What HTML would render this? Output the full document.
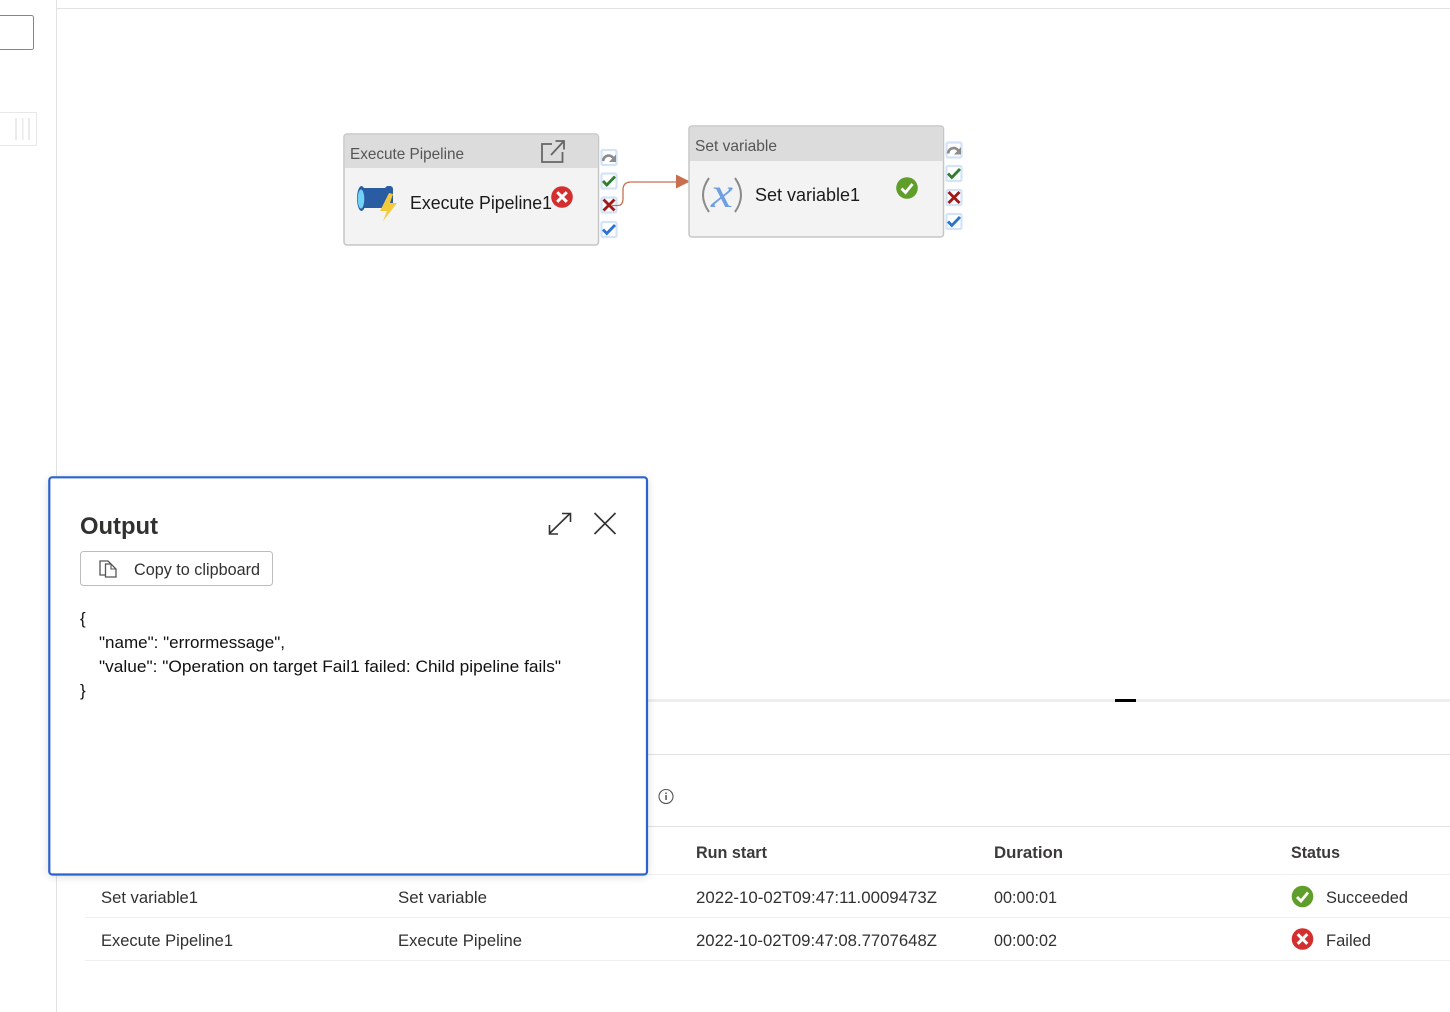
<!DOCTYPE html>
<html><head><meta charset="utf-8"><title>Output</title>
<style>
html,body{margin:0;padding:0;background:#fff;width:1450px;height:1012px;overflow:hidden}
svg{display:block}
text{font-family:"Liberation Sans",sans-serif;font-size:17px;fill:#323130}
.b{font-weight:bold;stroke:none;fill:#3b3a39}
</style></head><body>
<svg width="1450" height="1012" viewBox="0 0 1450 1012" xmlns="http://www.w3.org/2000/svg">
<defs>
<filter id="sh" x="-5%" y="-5%" width="110%" height="110%"><feGaussianBlur stdDeviation="5"/></filter>
<g id="box"><rect x="-7.500" y="-7.500" width="15" height="15" rx="1.500" fill="#fff" stroke="#d3e4f8" stroke-width="2.200"/></g>
<g id="redo"><use href="#box"/><path d="M-6 3.500C-5-2.500 1.500-4 5 1.500" fill="none" stroke="#8c8c8c" stroke-width="2.600"/><path d="M7-3V4.500H0Z" fill="#8c8c8c"/></g>
<g id="gc"><use href="#box"/><path d="M-6 0L-2.200 4L6-4.500" fill="none" stroke="#2f7d2f" stroke-width="2.800"/></g>
<g id="rx"><use href="#box"/><path d="M-5.500-5.500L5.500 5.500M5.500-5.500L-5.500 5.500" fill="none" stroke="#a11a1a" stroke-width="2.900"/></g>
<g id="bc"><use href="#box"/><path d="M-6 0L-2.200 4L6-4.500" fill="none" stroke="#2a74d0" stroke-width="2.800"/></g>
<g id="ok"><circle r="10.800" fill="#5f9e2a"/><path d="M-5.500 0.500L-1.500 4.500L5.500-4" fill="none" stroke="#fff" stroke-width="2.800"/></g>
<g id="bad"><circle r="10.800" fill="#d32f2f"/><path d="M-4.800-4.800L4.800 4.800M4.800-4.800L-4.800 4.800" fill="none" stroke="#fff" stroke-width="3"/></g>
</defs>

<!-- page chrome -->
<rect x="56" y="0" width="1" height="1012" fill="#e2e2e2"/>
<rect x="57" y="8" width="1393" height="1" fill="#e2e2e2"/>
<rect x="-3" y="15.500" width="36.500" height="34" rx="2" fill="#fff" stroke="#858585"/>
<rect x="-3" y="112.500" width="39.500" height="33" fill="#fff" stroke="#e8e8e8"/>
<rect x="15" y="118" width="2" height="22" fill="#ebebeb"/><rect x="22" y="118" width="1.500" height="22" fill="#ebebeb"/><rect x="28" y="118" width="2" height="22" fill="#ebebeb"/>

<!-- Execute Pipeline node -->
<rect x="344" y="134" width="254.500" height="111" rx="3" fill="#f3f3f3" stroke="#c6c6c6" stroke-width="1.500"/>
<path d="M345 168V136q0-1 1-1H597q1 0 1 1V168Z" fill="#dcdcdc"/>
<text x="350" y="159" textLength="114" lengthAdjust="spacingAndGlyphs" style="font-size:16px;fill:#555">Execute Pipeline</text>
<path d="M552 144H542V162H562.500V152M551 155L563 142M555.500 141H564V149.500" fill="none" stroke="#666" stroke-width="1.800"/>
<rect x="364" y="188" width="24" height="20" fill="#2a5ca3"/>
<rect x="385" y="186" width="8" height="23" rx="3" fill="#2a5ca3"/>
<ellipse cx="361.500" cy="198.500" rx="4.500" ry="12.500" fill="#2a5ca3"/>
<ellipse cx="361" cy="199" rx="3.300" ry="9.500" fill="#70d3f5"/>
<path d="M389 193L380 211H387L383 221L397 203H390L393 194Z" fill="#f4ca3c"/>
<text x="410" y="209" textLength="142" lengthAdjust="spacingAndGlyphs" style="font-size:18.500px;fill:#1b1b1b">Execute Pipeline1</text>
<use href="#bad" x="562" y="197"/>
<use href="#redo" x="609" y="157.500"/><use href="#gc" x="609" y="181"/><use href="#rx" x="609" y="205"/><use href="#bc" x="609" y="229.500"/>

<!-- connector -->
<path d="M612 205.500H618Q623 205.500 623 198V190Q623 182 631 182H677" fill="none" stroke="#c96f50" stroke-width="1.300"/>
<path d="M676 174.500L690 181.500L676 188.500Z" fill="#c96f50"/>

<!-- Set variable node -->
<rect x="689" y="126" width="254.500" height="111" rx="3" fill="#f3f3f3" stroke="#c6c6c6" stroke-width="1.500"/>
<path d="M690 161V128q0-1 1-1H942q1 0 1 1V161Z" fill="#dcdcdc"/>
<text x="695" y="151" textLength="82" lengthAdjust="spacingAndGlyphs" style="font-size:16px;fill:#555">Set variable</text>
<path d="M709 178Q697 195 709 212M735 178Q747 195 735 212" fill="none" stroke="#8a8a8a" stroke-width="2"/>
<text x="711" y="207" textLength="22" lengthAdjust="spacingAndGlyphs" style="font-family:'Liberation Serif',serif;font-style:italic;font-size:42px;fill:#6f9fe3">x</text>
<text x="755" y="201" textLength="105" lengthAdjust="spacingAndGlyphs" style="font-size:18.500px;fill:#1b1b1b">Set variable1</text>
<use href="#ok" x="907" y="188"/>
<use href="#redo" x="954" y="150"/><use href="#gc" x="954" y="173.500"/><use href="#rx" x="954" y="197.500"/><use href="#bc" x="954" y="221.500"/>

<!-- splitter and table -->
<rect x="640" y="699" width="810" height="3" fill="#eeeeee"/>
<rect x="1115" y="699" width="21" height="3" fill="#000"/>
<rect x="640" y="754" width="810" height="1" fill="#e0e0e0"/>
<rect x="640" y="826" width="810" height="1" fill="#e0e0e0"/>
<circle cx="666" cy="796.500" r="7" fill="none" stroke="#555" stroke-width="1.100"/>
<rect x="665.300" y="795" width="1.500" height="5" fill="#555"/><rect x="665.300" y="792.500" width="1.500" height="1.500" fill="#555"/>
<rect x="85" y="874" width="1365" height="1" fill="#efefef"/>
<rect x="85" y="917" width="1365" height="1" fill="#efefef"/>
<rect x="85" y="960" width="1365" height="1" fill="#efefef"/>

<text class="b" x="696" y="858" textLength="71" lengthAdjust="spacingAndGlyphs">Run start</text>
<text class="b" x="994" y="858" textLength="69" lengthAdjust="spacingAndGlyphs">Duration</text>
<text class="b" x="1291" y="858" textLength="49" lengthAdjust="spacingAndGlyphs">Status</text>

<text x="101" y="903" textLength="97" lengthAdjust="spacingAndGlyphs">Set variable1</text>
<text x="398" y="903" textLength="89" lengthAdjust="spacingAndGlyphs">Set variable</text>
<text x="696" y="903" textLength="241" lengthAdjust="spacingAndGlyphs">2022-10-02T09:47:11.0009473Z</text>
<text x="994" y="903" textLength="63" lengthAdjust="spacingAndGlyphs">00:00:01</text>
<use href="#ok" x="1302.500" y="896.500"/>
<text x="1326" y="903" textLength="82" lengthAdjust="spacingAndGlyphs">Succeeded</text>

<text x="101" y="946" textLength="132" lengthAdjust="spacingAndGlyphs">Execute Pipeline1</text>
<text x="398" y="946" textLength="124" lengthAdjust="spacingAndGlyphs">Execute Pipeline</text>
<text x="696" y="946" textLength="241" lengthAdjust="spacingAndGlyphs">2022-10-02T09:47:08.7707648Z</text>
<text x="994" y="946" textLength="63" lengthAdjust="spacingAndGlyphs">00:00:02</text>
<use href="#bad" x="1302.500" y="939"/>
<text x="1326" y="946" textLength="45" lengthAdjust="spacingAndGlyphs">Failed</text>

<!-- dialog -->
<rect x="49" y="479" width="598" height="397" rx="3" fill="#000" opacity=".16" filter="url(#sh)"/>
<rect x="49.300" y="477.300" width="597.700" height="397.200" rx="3" fill="#fff" stroke="#2b62d0" stroke-width="2.200"/>
<text class="b" x="80" y="534" textLength="78" lengthAdjust="spacingAndGlyphs" style="font-size:24px;fill:#323130">Output</text>
<path d="M550 533L570 513.500M562 513.500H570.500V522M549.500 525V534H558" fill="none" stroke="#333" stroke-width="1.600"/>
<path d="M594.500 513L615.500 534M615.500 513L594.500 534" fill="none" stroke="#333" stroke-width="1.600"/>
<rect x="80.500" y="551.500" width="192" height="34" rx="3" fill="#fff" stroke="#bdbdbd"/>
<path d="M105 575H100V561H108L111 564" fill="none" stroke="#555" stroke-width="1.300"/>
<path d="M105.500 564H111L116 569V577H105.500Z" fill="#fff" stroke="#555" stroke-width="1.300"/>
<path d="M111 564V569H116" fill="none" stroke="#555" stroke-width="1.100"/>
<text x="134" y="575" textLength="126" lengthAdjust="spacingAndGlyphs">Copy to clipboard</text>
<text x="80" y="624" style="fill:#111">{</text>
<text x="99" y="648" textLength="186" lengthAdjust="spacingAndGlyphs" style="fill:#111">"name": "errormessage",</text>
<text x="99" y="672" textLength="462" lengthAdjust="spacingAndGlyphs" style="fill:#111">"value": "Operation on target Fail1 failed: Child pipeline fails"</text>
<text x="80" y="696" style="fill:#111">}</text>
</svg>
</body></html>
